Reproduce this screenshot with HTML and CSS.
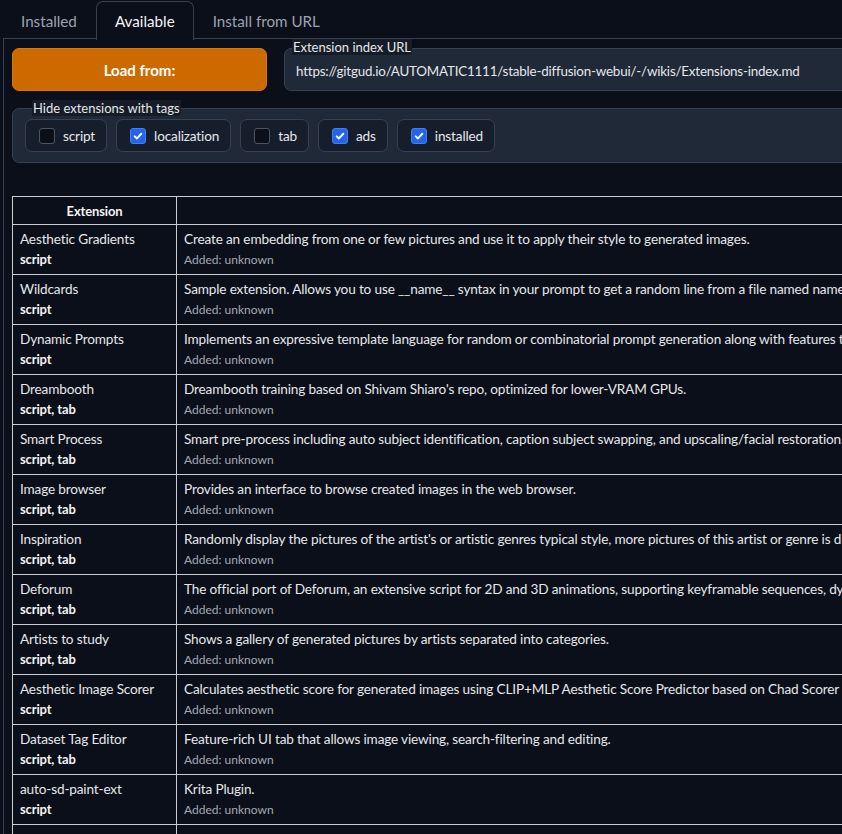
FILE: index.html
```html
<!DOCTYPE html>
<html>
<head>
<meta charset="utf-8">
<link rel="stylesheet" href="styles.css">
</head>
<body>
<div class="app">
  <div class="tabs">
    <button class="tab">Installed</button>
    <button class="tab active">Available</button>
    <button class="tab">Install from URL</button>
  </div>
  <div class="panel">
    <div class="row">
      <button class="primary">Load from:</button>
      <label class="textbox">
        <span class="blabel">Extension index URL</span>
        <span class="input">https://gitgud.io/AUTOMATIC1111/stable-diffusion-webui/-/wikis/Extensions-index.md</span>
      </label>
    </div>
    <div class="group">
      <span class="blabel glabel">Hide extensions with tags</span>
      <div class="checks">
        <label class="pill"><span class="box"></span>script</label>
        <label class="pill"><span class="box on"><svg viewBox="0 0 16 16"><path d="M4.2 8.4l2.6 2.4 5-5.4" /></svg></span>localization</label>
        <label class="pill"><span class="box"></span>tab</label>
        <label class="pill"><span class="box on"><svg viewBox="0 0 16 16"><path d="M4.2 8.4l2.6 2.4 5-5.4" /></svg></span>ads</label>
        <label class="pill"><span class="box on"><svg viewBox="0 0 16 16"><path d="M4.2 8.4l2.6 2.4 5-5.4" /></svg></span>installed</label>
      </div>
    </div>
    <table class="ext">
      <thead>
        <tr><th class="c1">Extension</th><th></th></tr>
      </thead>
      <tbody>
        <tr><td><div class="l1">Aesthetic Gradients</div><b class="l2">script</b></td><td><div class="l1">Create an embedding from one or few pictures and use it to apply their style to generated images.</div><span class="l2 added">Added: unknown</span></td></tr>
        <tr><td><div class="l1">Wildcards</div><b class="l2">script</b></td><td><div class="l1">Sample extension. Allows you to use __name__ syntax in your prompt to get a random line from a file named name.txt in the wildcards directory.</div><span class="l2 added">Added: unknown</span></td></tr>
        <tr><td><div class="l1">Dynamic Prompts</div><b class="l2">script</b></td><td><div class="l1">Implements an expressive template language for random or combinatorial prompt generation along with features to support deep wildcard directory structures.</div><span class="l2 added">Added: unknown</span></td></tr>
        <tr><td><div class="l1">Dreambooth</div><b class="l2">script, tab</b></td><td><div class="l1">Dreambooth training based on Shivam Shiaro's repo, optimized for lower-VRAM GPUs.</div><span class="l2 added">Added: unknown</span></td></tr>
        <tr><td><div class="l1">Smart Process</div><b class="l2">script, tab</b></td><td><div class="l1">Smart pre-process including auto subject identification, caption subject swapping, and upscaling/facial restoration.</div><span class="l2 added">Added: unknown</span></td></tr>
        <tr><td><div class="l1">Image browser</div><b class="l2">script, tab</b></td><td><div class="l1">Provides an interface to browse created images in the web browser.</div><span class="l2 added">Added: unknown</span></td></tr>
        <tr><td><div class="l1">Inspiration</div><b class="l2">script, tab</b></td><td><div class="l1">Randomly display the pictures of the artist's or artistic genres typical style, more pictures of this artist or genre is displayed after selecting.</div><span class="l2 added">Added: unknown</span></td></tr>
        <tr><td><div class="l1">Deforum</div><b class="l2">script, tab</b></td><td><div class="l1">The official port of Deforum, an extensive script for 2D and 3D animations, supporting keyframable sequences, dynamic math parameters.</div><span class="l2 added">Added: unknown</span></td></tr>
        <tr><td><div class="l1">Artists to study</div><b class="l2">script, tab</b></td><td><div class="l1">Shows a gallery of generated pictures by artists separated into categories.</div><span class="l2 added">Added: unknown</span></td></tr>
        <tr><td><div class="l1">Aesthetic Image Scorer</div><b class="l2">script</b></td><td><div class="l1">Calculates aesthetic score for generated images using CLIP+MLP Aesthetic Score Predictor based on Chad Scorer</div><span class="l2 added">Added: unknown</span></td></tr>
        <tr><td><div class="l1">Dataset Tag Editor</div><b class="l2">script, tab</b></td><td><div class="l1">Feature-rich UI tab that allows image viewing, search-filtering and editing.</div><span class="l2 added">Added: unknown</span></td></tr>
        <tr><td><div class="l1">auto-sd-paint-ext</div><b class="l2">script</b></td><td><div class="l1">Krita Plugin.</div><span class="l2 added">Added: unknown</span></td></tr>
        <tr><td><div class="l1">training-picker</div><b class="l2">script, tab</b></td><td><div class="l1">Adds a tab to the webui that allows the user to automatically extract keyframes from video.</div><span class="l2 added">Added: unknown</span></td></tr>
      </tbody>
    </table>
  </div>
</div>
</body>
</html>
```

FILE: styles.css
```css
html, body {
  margin: 0;
  padding: 0;
  background: #0b0f19;
  overflow: hidden;
  height: 834px;
}
body {
  font-family: Lato, "Noto Sans", sans-serif;
  color: #e5e7eb;
}
.app {
  width: 1300px;
}
.tabs {
  display: flex;
  height: 38px;
  position: relative;
  z-index: 1;
  padding-left: 2px;
}
.tab {
  font-family: inherit;
  font-size: 15.2px;
  color: #9ca3af;
  background: transparent;
  border: 1px solid transparent;
  border-bottom: none;
  padding: 0 18px;
  height: 38px;
  margin-top: 1px;
  border-radius: 7px 7px 0 0;
  cursor: pointer;
}
.tab.active {
  color: #f3f4f6;
  border-color: #374151;
  background: #0b0f19;
  height: 39px;
}
.panel {
  margin-left: 3px;
  border-top: 1px solid #374151;
  border-left: 1px solid #374151;
  padding: 9px 0 0 8px;
}
.row {
  display: flex;
  gap: 17px;
  height: 43px;
}
.primary {
  width: 255px;
  flex: none;
  height: 43px;
  background: #cc6a00;
  border: 1px solid #d97706;
  border-radius: 7px;
  color: #fff;
  font-family: inherit;
  font-weight: 700;
  font-size: 15px;
}
.textbox {
  flex: 1;
  position: relative;
  display: flex;
  align-items: center;
  background: #1f2937;
  border: 1px solid #374151;
  border-radius: 7px;
  padding-left: 11px;
  box-sizing: border-box;
}
.blabel {
  position: absolute;
  top: -10px;
  left: 7px;
  font-size: 13px;
  color: #e5e7eb;
  background: #161c27;
  padding: 0 1px;
  line-height: 16px;
  border-radius: 0 0 4px 0;
}
.input {
  font-size: 13.4px;
  letter-spacing: -0.2px;
  color: #e5e7eb;
  padding-top: 2px;
  white-space: nowrap;
}
.group {
  position: relative;
  margin-top: 17px;
  height: 55px;
  background: #1f2937;
  border: 1px solid #374151;
  border-radius: 7px;
  box-sizing: border-box;
  padding: 10px 12px;
}
.glabel {
  left: 19px;
  top: -9px;
}
.checks {
  display: flex;
  gap: 9px;
}
.pill {
  display: flex;
  align-items: center;
  height: 33px;
  box-sizing: border-box;
  padding: 0 11px 0 13px;
  background: #171e2b;
  border: 1px solid #374151;
  border-radius: 7px;
  font-size: 13.6px;
  letter-spacing: -0.15px;
  color: #e5e7eb;
}
.box {
  width: 16px;
  height: 16px;
  box-sizing: border-box;
  border: 1px solid #4b5563;
  border-radius: 3px;
  background: #0b0f19;
  margin-right: 8px;
  display: flex;
}
.box.on {
  background: #2563eb;
  border-color: #3b82f6;
}
.box svg {
  width: 14px;
  height: 14px;
  fill: none;
  stroke: #fff;
  stroke-width: 2.2;
  stroke-linecap: round;
  stroke-linejoin: round;
}
.ext {
  margin-top: 33px;
  border-collapse: collapse;
  width: 1280px;
  font-size: 13.6px;
  letter-spacing: -0.15px;
}
.ext th, .ext td {
  border: 1px solid #c9cdd3;
  text-align: left;
  vertical-align: top;
  white-space: nowrap;
}
.ext th {
  height: 27px;
  font-size: 13px;
  font-weight: 700;
  text-align: center;
  vertical-align: middle;
  padding: 0;
  color: #f3f4f6;
}
.ext th.c1 {
  width: 163px;
}
.ext td {
  height: 49px;
  box-sizing: border-box;
  padding: 4px 7px 5px 7px;
  color: #e5e7eb;
}
.l1, .l2 {
  display: block;
  height: 20px;
  line-height: 20px;
}
.ext td b {
  font-size: 13px;
  color: #f3f4f6;
}
.added {
  font-size: 12px;
  letter-spacing: 0;
  color: #a3aab5;
  padding-top: 1px;
  height: 19px;
}
```
